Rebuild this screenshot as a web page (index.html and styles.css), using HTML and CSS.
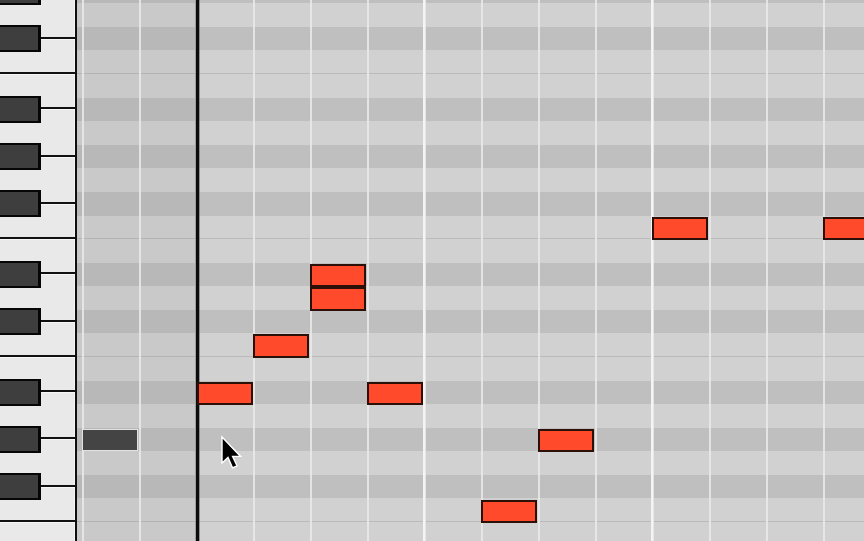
FILE: index.html
```html
<!DOCTYPE html>
<html lang="en">
<head>
<meta charset="utf-8">
<title>Piano roll</title>
<link rel="stylesheet" href="styles.css">
</head>
<body>
<div class="app">
  <div class="piano">
    <div class="whites">
      <div class="wk tall"></div>
      <div class="wk short"></div>
      <div class="wk short"></div>
      <div class="wk tall"></div>
      <div class="wk tall"></div>
      <div class="wk short"></div>
      <div class="wk short"></div>
      <div class="wk tall"></div>
      <div class="wk short"></div>
      <div class="wk short"></div>
      <div class="wk tall"></div>
      <div class="wk tall"></div>
      <div class="wk short"></div>
      <div class="wk short"></div>
    </div>
    <div class="bk" style="--r:0"></div>
    <div class="bk" style="--r:2"></div>
    <div class="bk" style="--r:5"></div>
    <div class="bk" style="--r:7"></div>
    <div class="bk" style="--r:9"></div>
    <div class="bk" style="--r:12"></div>
    <div class="bk" style="--r:14"></div>
    <div class="bk" style="--r:17"></div>
    <div class="bk" style="--r:19"></div>
    <div class="bk" style="--r:21"></div>
  </div>
  <div class="roll">
    <div class="rows">
      <div class="row dark"></div>
      <div class="row"></div>
      <div class="row dark"></div>
      <div class="row edge"></div>
      <div class="row"></div>
      <div class="row dark"></div>
      <div class="row"></div>
      <div class="row dark"></div>
      <div class="row"></div>
      <div class="row dark"></div>
      <div class="row edge"></div>
      <div class="row"></div>
      <div class="row dark"></div>
      <div class="row"></div>
      <div class="row dark"></div>
      <div class="row edge"></div>
      <div class="row"></div>
      <div class="row dark"></div>
      <div class="row"></div>
      <div class="row dark"></div>
      <div class="row"></div>
      <div class="row dark"></div>
      <div class="row edge"></div>
      <div class="row"></div>
    </div>
    <div class="past"></div>
    <div class="beats"></div>
    <div class="bars"></div>
    <div class="playhead"></div>
    <div class="note ghost" style="--c:0;--r:19"></div>
    <div class="note first" style="--c:2;--r:17"></div>
    <div class="note" style="--c:3;--r:15"></div>
    <div class="note" style="--c:4;--r:12"></div>
    <div class="note" style="--c:4;--r:13"></div>
    <div class="note" style="--c:5;--r:17"></div>
    <div class="note" style="--c:7;--r:22"></div>
    <div class="note" style="--c:8;--r:19"></div>
    <div class="note" style="--c:10;--r:10"></div>
    <div class="note" style="--c:13;--r:10"></div>
    <svg class="cursor" width="24" height="36" viewBox="-2 -2 24 36" aria-hidden="true">
      <path d="M0 0 L0 26 L6 20.5 L10.5 30.8 L15 28.8 L10.6 19.4 L18.6 19.4 Z" fill="#000" stroke="#fff" stroke-width="1.4" stroke-linejoin="miter"/>
    </svg>
  </div>
</div>
</body>
</html>
```

FILE: styles.css
```css
html, body {
  margin: 0;
  padding: 0;
  background: #d0d0d0;
  font-family: "Liberation Sans", Arial, sans-serif;
}

.app {
  display: flex;
  width: 864px;
  height: 541px;
  overflow: hidden;
}

/* ---------- piano keyboard ---------- */
.piano {
  position: relative;
  flex: 0 0 75px;
  border-right: 2px solid #0e0e0e;
  background: #e9e9e9;
  overflow: hidden;
}

.whites {
  display: flex;
  flex-direction: column;
  margin-top: -8.47px;
}

.wk {
  box-sizing: border-box;
  flex: 0 0 auto;
  background: #e9e9e9;
  border-bottom: 2px solid #111;
  box-shadow: inset 0 1px 0 #f7f7f7, inset -1px 0 0 #f4f4f4;
}

.wk.tall { height: 47.16px; }
.wk.short { height: 35.37px; }

.bk {
  position: absolute;
  left: 0;
  top: calc(-22.06px + var(--r) * 23.58px);
  box-sizing: border-box;
  width: 40.5px;
  height: 27.3px;
  background: #3e3e3e;
  border: 2px solid #060606;
  border-left: 0;
  border-right-width: 3px;
}

/* ---------- note grid ---------- */
.roll {
  position: relative;
  flex: 1 1 auto;
  overflow: hidden;
}

.rows {
  display: flex;
  flex-direction: column;
  margin-top: -20.26px;
}

.row {
  box-sizing: border-box;
  flex: 0 0 auto;
  height: 23.58px;
  background: #d1d1d1;
}

.row.dark { background: #bfbfbf; }
.row.edge { border-bottom: 1px solid #bababa; }

.past {
  position: absolute;
  left: 0;
  top: 0;
  width: 120px;
  height: 100%;
  background: rgba(0, 0, 0, 0.035);
}

.beats {
  position: absolute;
  left: 4.5px;
  top: 0;
  right: 0;
  height: 100%;
  background: repeating-linear-gradient(90deg,
    rgba(234, 234, 234, 0.85) 0 1.5px,
    transparent 1.5px 57px);
}

.bars {
  position: absolute;
  left: 118px;
  top: 0;
  right: 0;
  height: 100%;
  background: repeating-linear-gradient(90deg,
    #f4f4f4 0 2px,
    transparent 2px 228px);
}

.note {
  position: absolute;
  left: calc(5px + var(--c) * 57px);
  top: calc(-19.26px + var(--r) * 23.58px);
  box-sizing: border-box;
  width: 56px;
  height: 23.3px;
  background: #ff4a2c;
  border: 2px solid #2c0f06;
}

.note.first {
  left: calc(6px + var(--c) * 57px);
  width: 55.5px;
}

.note.ghost {
  background: #444444;
  border: 1.5px solid #e2e2e2;
  height: 22.5px;
}

.playhead {
  position: absolute;
  left: 119px;
  top: 0;
  width: 3px;
  height: 100%;
  background: #0c0c0c;
  box-shadow: 0 0 0 0.6px #666;
}

.cursor {
  position: absolute;
  left: 143px;
  top: 435px;
}
```
